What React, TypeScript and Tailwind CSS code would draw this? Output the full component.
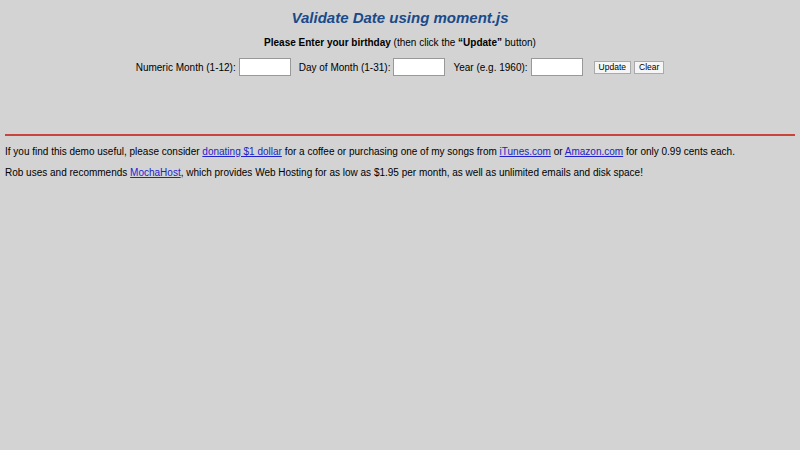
export default function App() {
    return (
        <div className="min-h-[450px] bg-[#d3d3d3] px-[5px] text-[10px] text-black" style={{ fontFamily: '"Liberation Sans", Arial, sans-serif' }}>
            <h1 className="pt-[9px] text-center text-[15px] font-bold italic leading-[18px] text-[#1a4a8a]">
                Validate Date using moment.js
            </h1>
            <p className="mt-[9px] text-center leading-[14px]">
                <b>Please Enter your birthday</b> (then click the <b>“Update”</b> button)
            </p>
            <form className="mt-[7px] flex h-[20px] items-center justify-center" onSubmit={e => e.preventDefault()}>
                <label className="flex items-center">
                    Numeric Month (1-12):
                    <input type="text" className="ml-[3px] h-[18px] w-[52px] border border-[#999] bg-white" />
                </label>
                <label className="ml-[8px] flex items-center">
                    Day of Month (1-31):
                    <input type="text" className="ml-[3px] h-[18px] w-[52px] border border-[#999] bg-white" />
                </label>
                <label className="ml-[8px] flex items-center">
                    Year (e.g. 1960):
                    <input type="text" className="ml-[3px] h-[18px] w-[52px] border border-[#999] bg-white" />
                </label>
                <button type="button" className="ml-[11px] h-[13px] border border-[#aaa] bg-[#f5f5f5] px-[4px] text-[8.5px] leading-[11px]">
                    Update
                </button>
                <button type="button" className="ml-[3px] h-[13px] border border-[#aaa] bg-[#f5f5f5] px-[4px] text-[8.5px] leading-[11px]">
                    Clear
                </button>
            </form>
            <hr className="mt-[57px] border-0 border-t-2 border-[#c8443c]" />
            <p className="mt-[9px] leading-[14px]">
                If you find this demo useful, please consider <a href="#" className="text-[#2222cc] underline">donating $1 dollar</a> for a coffee or purchasing one of my songs from <a href="#" className="text-[#2222cc] underline">iTunes.com</a> or <a href="#" className="text-[#2222cc] underline">Amazon.com</a> for only 0.99 cents each.
            </p>
            <p className="mt-[7px] leading-[14px]">
                Rob uses and recommends <a href="#" className="text-[#2222cc] underline">MochaHost</a>, which provides Web Hosting for as low as $1.95 per month, as well as unlimited emails and disk space!
            </p>
        </div>
    );
}
